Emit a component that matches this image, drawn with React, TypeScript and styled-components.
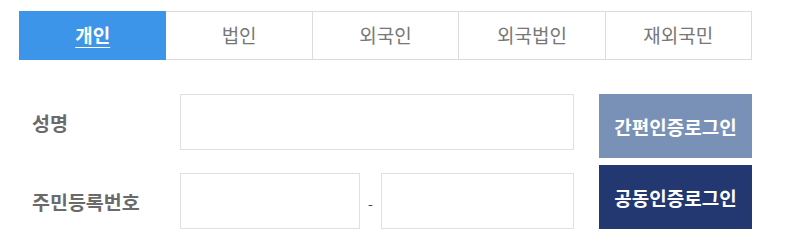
import React from "react";
import styled, { createGlobalStyle } from "styled-components";

const Global = createGlobalStyle`
  html, body { margin: 0; padding: 0; background: #fff; }
  body { font-family: "Noto Sans CJK KR", "Noto Sans", sans-serif; }
  * { box-sizing: border-box; }
`;

const Wrap = styled.div`
  padding: 11px 0 0 19px;
  width: 785px;
`;

const Tabs = styled.ul`
  display: flex;
  width: 733px;
  margin: 0;
  padding: 0;
  list-style: none;
`;

const Tab = styled.li<{ $active?: boolean }>`
  flex: 1;
  height: 49px;
  display: flex;
  align-items: center;
  justify-content: center;
  border: 1px solid ${(p) => (p.$active ? "#3d95ea" : "#dcdcdc")};
  border-left: ${(p) => (p.$active ? "1px solid #3d95ea" : "none")};
  background: ${(p) => (p.$active ? "#3d95ea" : "#fff")};
  color: ${(p) => (p.$active ? "#fff" : "#777")};
  font-size: 19px;
  font-weight: ${(p) => (p.$active ? 700 : 400)};
  text-decoration: ${(p) => (p.$active ? "underline" : "none")};
  text-underline-offset: 4px;
  text-decoration-thickness: 1px;
  padding-bottom: 2px;
`;

const Form = styled.div`
  display: flex;
  margin-top: 34px;
`;

const Fields = styled.div`
  display: flex;
  flex-direction: column;
  gap: 23px;
`;

const Row = styled.div`
  display: flex;
  align-items: center;
`;

const Label = styled.div`
  width: 161px;
  padding-left: 13px;
  font-size: 19.5px;
  font-weight: 700;
  color: #6a6a6a;
`;

const Input = styled.input<{ $w: number }>`
  width: ${(p) => p.$w}px;
  height: 56px;
  border: 1px solid #e0e0e0;
  outline: none;
  padding: 0 10px;
  font-size: 16px;
`;

const Dash = styled.span`
  width: 21px;
  text-align: center;
  font-size: 14px;
  color: #444;
  padding-top: 4px;
`;

const Buttons = styled.div`
  display: flex;
  flex-direction: column;
  gap: 7px;
  margin-left: 25px;
`;

const Btn = styled.button<{ $bg: string }>`
  width: 153px;
  height: 64px;
  border: none;
  background: ${(p) => p.$bg};
  color: #fff;
  font-family: "Noto Sans CJK KR", "Noto Sans", sans-serif;
  font-size: 19px;
  font-weight: 700;
  padding: 0;
  cursor: pointer;
`;

export default function App() {
  const tabs = ["개인", "법인", "외국인", "외국법인", "재외국민"];
  return (
    <Wrap>
      <Global />
      <Tabs>
        {tabs.map((t, i) => (
          <Tab key={t} $active={i === 0}>
            {t}
          </Tab>
        ))}
      </Tabs>
      <Form>
        <Fields>
          <Row>
            <Label>성명</Label>
            <Input $w={394} />
          </Row>
          <Row>
            <Label>주민등록번호</Label>
            <Input $w={180} />
            <Dash>-</Dash>
            <Input $w={193} />
          </Row>
        </Fields>
        <Buttons>
          <Btn $bg="#7a91b7">간편인증로그인</Btn>
          <Btn $bg="#233770">공동인증로그인</Btn>
        </Buttons>
      </Form>
    </Wrap>
  );
}
